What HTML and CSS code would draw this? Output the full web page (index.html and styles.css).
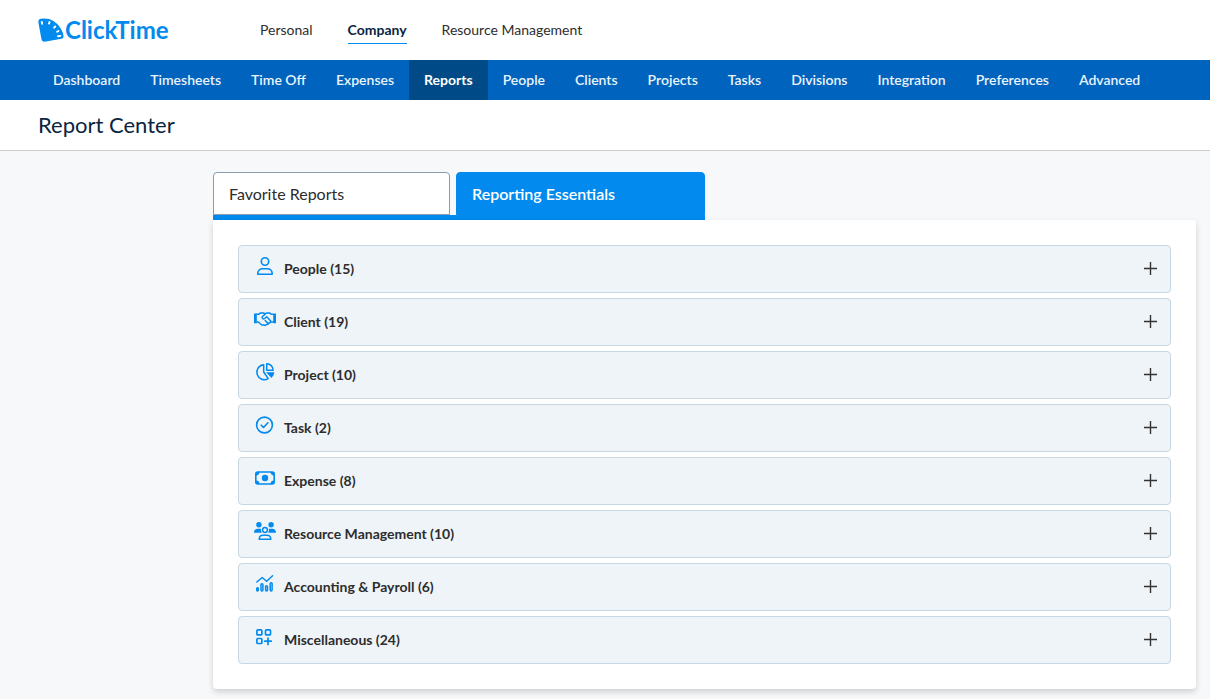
FILE: index.html
```html
<!DOCTYPE html>
<html lang="en">
<head>
<meta charset="utf-8">
<meta name="viewport" content="width=device-width, initial-scale=1">
<title>Report Center - ClickTime</title>
<link rel="stylesheet" href="styles.css">
</head>
<body>
<header class="top">
  <a class="logo" href="#">
    <svg class="logo-mark" viewBox="0 0 26 26" aria-hidden="true">
      <path fill="#028aee" d="M2.500 1.800Q15-.5 22.500 11Q25.500 16 25.600 19.500Q25.500 21.500 23.500 21.800L6.500 24.800Q4 24.800 3.500 22.500L.3 5Q.2 2.300 2.500 1.800Z"/>
      <g stroke="#fff" stroke-width="1.900" stroke-linecap="round"><path d="M3.800 5l.3 1.800M11.500 5l-.5 1.600M17.300 9.500l-1.200 1.200M20.500 14l-1.400.8M20 19.300l2.400-.4"/></g>
    </svg>
    <span class="logo-text">ClickTime</span>
  </a>
  <nav class="areas" aria-label="Areas">
    <a href="#">Personal</a>
    <a class="current" href="#" aria-current="true">Company</a>
    <a href="#">Resource Management</a>
  </nav>
</header>
<nav class="bar" aria-label="Company">
  <a href="#">Dashboard</a>
  <a href="#">Timesheets</a>
  <a href="#">Time Off</a>
  <a href="#">Expenses</a>
  <a class="current" href="#" aria-current="page">Reports</a>
  <a href="#">People</a>
  <a href="#">Clients</a>
  <a href="#">Projects</a>
  <a href="#">Tasks</a>
  <a href="#">Divisions</a>
  <a href="#">Integration</a>
  <a href="#">Preferences</a>
  <a href="#">Advanced</a>
</nav>
<div class="title"><h1>Report Center</h1></div>
<main class="content">
  <div class="tabs" role="tablist">
    <button class="tab" type="button" role="tab" aria-selected="false">Favorite Reports</button>
    <button class="tab active" type="button" role="tab" aria-selected="true">Reporting Essentials</button>
  </div>
  <section class="panel">
    <button class="row" type="button" aria-expanded="false">
      <svg class="icon" viewBox="0 0 22 20" aria-hidden="true"><g fill="none" stroke="#028aee" stroke-width="1.600"><circle cx="11" cy="5.500" r="3.700"/><path d="M3.800 18.200h14.400v-.7c0-3-2.200-4.800-5-4.800H8.800c-2.800 0-5 1.800-5 4.800z" stroke-linejoin="round"/></g></svg>
      <span class="label">People (15)</span>
      <svg class="plus" viewBox="0 0 13 13" aria-hidden="true"><path d="M6.500 0v13M0 6.500h13"/></svg>
    </button>
    <button class="row" type="button" aria-expanded="false">
      <svg class="icon" viewBox="0 0 22 20" aria-hidden="true"><path fill="#028aee" d="M0 4.500h2.800v9.800H0zM19.200 4.500H22v9.800h-2.800z"/><path fill="none" stroke="#028aee" stroke-width="1.500" stroke-linejoin="round" stroke-linecap="round" d="M2.800 5.300h1.700L6.500 4h3l1.500.7M2.800 13h1.500l3.500 3h2l1.400.5 1.200-1 1.600-.2 1-1.400 1.800-.9h2.400M19.200 5.300h-1.700L15.500 4h-3L8.200 7.800c-.6 1.600 1.200 2.700 2.500 1.700l2-1.700 4 4.200c.4.700 0 1.300-.7 1.800M11.200 11.500l2.400 2.600"/></svg>
      <span class="label">Client (19)</span>
      <svg class="plus" viewBox="0 0 13 13" aria-hidden="true"><path d="M6.500 0v13M0 6.500h13"/></svg>
    </button>
    <button class="row" type="button" aria-expanded="false">
      <svg class="icon" viewBox="0 0 22 20" aria-hidden="true"><path fill="none" stroke="#028aee" stroke-width="1.500" stroke-linejoin="round" d="M9.700 2.700a7.500 7.500 0 1 0 4.500 13.900L9.700 10zM12.700 1.700v6.500h6.400a6.500 6.500 0 0 0-6.400-6.500z"/><path fill="#028aee" d="M12 10.200h8.300a7.500 7.500 0 0 1-2.800 5.700z"/></svg>
      <span class="label">Project (10)</span>
      <svg class="plus" viewBox="0 0 13 13" aria-hidden="true"><path d="M6.500 0v13M0 6.500h13"/></svg>
    </button>
    <button class="row" type="button" aria-expanded="false">
      <svg class="icon" viewBox="0 0 22 20" aria-hidden="true"><g fill="none" stroke="#028aee" stroke-width="1.600" stroke-linecap="round" stroke-linejoin="round"><circle cx="10.500" cy="10" r="7.900"/><path d="M7.200 10.200l2.300 2.300 4.400-4.700"/></g></svg>
      <span class="label">Task (2)</span>
      <svg class="plus" viewBox="0 0 13 13" aria-hidden="true"><path d="M6.500 0v13M0 6.500h13"/></svg>
    </button>
    <button class="row" type="button" aria-expanded="false">
      <svg class="icon" viewBox="0 0 22 20" aria-hidden="true"><rect x="1.800" y="4" width="18.400" height="12" rx="2" fill="none" stroke="#028aee" stroke-width="1.600"/><path fill="#028aee" d="M2 4h3.400a3.400 3.400 0 0 1-3.400 3.400zM20 4h-3.400a3.400 3.400 0 0 0 3.400 3.400zM2 16h3.400a3.400 3.400 0 0 0-3.400-3.400zM20 16h-3.400a3.400 3.400 0 0 1 3.400-3.400z"/><circle cx="11" cy="10" r="3.200" fill="#028aee"/></svg>
      <span class="label">Expense (8)</span>
      <svg class="plus" viewBox="0 0 13 13" aria-hidden="true"><path d="M6.500 0v13M0 6.500h13"/></svg>
    </button>
    <button class="row" type="button" aria-expanded="false">
      <svg class="icon" viewBox="0 0 22 20" aria-hidden="true"><g fill="#028aee"><circle cx="4.900" cy="3.800" r="2.700"/><circle cx="17.100" cy="3.800" r="2.700"/><path d="M0 11.700c0-2.500 1.500-4 3.700-4h2.200c.6 0 .9.200 1.200.4-.2 1.500 0 2.500.8 3.600zM22 11.700c0-2.500-1.500-4-3.700-4h-2.200c-.6 0-.9.200-1.200.4.200 1.500 0 2.500-.8 3.600z"/></g><g fill="none" stroke="#028aee" stroke-width="1.500" stroke-linejoin="round"><circle cx="11" cy="9" r="2.400"/><path d="M5.200 18.200h11.600c0-2.300-1.500-4-3.800-4H9c-2.300 0-3.800 1.700-3.800 4z"/></g></svg>
      <span class="label">Resource Management (10)</span>
      <svg class="plus" viewBox="0 0 13 13" aria-hidden="true"><path d="M6.500 0v13M0 6.500h13"/></svg>
    </button>
    <button class="row" type="button" aria-expanded="false">
      <svg class="icon" viewBox="0 0 22 20" aria-hidden="true"><g fill="none" stroke="#028aee" stroke-width="1.500"><path stroke-linecap="round" stroke-linejoin="round" d="M2.800 8l5.400-4.500 4.400 3.700 6-5.400"/><rect x="2.700" y="13.700" width="1.600" height="3.200" rx=".8"/><rect x="7" y="9.700" width="1.900" height="7.200" rx=".9"/><rect x="11.600" y="11.700" width="1.900" height="5.200" rx=".9"/><rect x="16.200" y="8.700" width="1.900" height="8.200" rx=".9"/></g></svg>
      <span class="label">Accounting &amp; Payroll (6)</span>
      <svg class="plus" viewBox="0 0 13 13" aria-hidden="true"><path d="M6.500 0v13M0 6.500h13"/></svg>
    </button>
    <button class="row" type="button" aria-expanded="false">
      <svg class="icon" viewBox="0 0 22 20" aria-hidden="true"><g fill="none" stroke="#028aee" stroke-width="1.700"><rect x="2.900" y="2.900" width="5" height="5" rx="1"/><rect x="11.500" y="2.900" width="5" height="5" rx="1"/><rect x="2.900" y="11.500" width="5" height="5" rx="1"/><path stroke-linecap="round" d="M14 11v6.400M10.800 14.200h6.400"/></g></svg>
      <span class="label">Miscellaneous (24)</span>
      <svg class="plus" viewBox="0 0 13 13" aria-hidden="true"><path d="M6.500 0v13M0 6.500h13"/></svg>
    </button>
  </section>
</main>
</body>
</html>
```
FILE: styles.css
```css
* { box-sizing: border-box; }
body {
  margin: 0;
  background: #f6f8fa;
  color: #2d2d2d;
  font-family: Lato, sans-serif;
  font-size: 14px;
}
a { color: inherit; text-decoration: none; }
button { font: inherit; color: inherit; text-align: left; cursor: pointer; }

.top {
  display: flex;
  align-items: center;
  height: 60px;
  padding: 0 38px;
  background: #fff;
}
.logo {
  display: flex;
  align-items: center;
  gap: 1px;
  width: 222px;
  color: #028aee;
}
.logo-mark { width: 26px; height: 26px; }
.logo-text {
  font-size: 24px;
  font-weight: 700;
  line-height: 28px;
}
.areas { display: flex; gap: 35px; }
.areas a { line-height: 26px; border-bottom: 1px solid transparent; }
.areas .current {
  color: #0a2540;
  font-weight: 700;
  border-bottom-color: #028aee;
}

.bar {
  display: flex;
  padding: 0 38px;
  background: #0063be;
  color: #eaf3fb;
  font-weight: 600;
}
.bar a { padding: 0 15px; line-height: 40px; white-space: nowrap; }
.bar .current { background: #004a87; color: #fff; font-weight: 700; }

.title {
  padding: 10px 38px;
  background: #fff;
  border-bottom: 1px solid #ccc;
}
.title h1 {
  margin: 0;
  color: #0a2540;
  font-size: 22px;
  font-weight: 400;
  line-height: 30px;
}

.content { padding: 21px 14px 10px 213px; }
.tabs {
  display: flex;
  gap: 6px;
  width: 492px;
  border-bottom: 5px solid #028aee;
}
.tab {
  width: 237px;
  height: 43px;
  padding: 0 15px;
  font-size: 16px;
  background: #fff;
  border: 1px solid #8a9bb0;
  border-radius: 4px 4px 0 0;
}
.tab.active {
  flex: 1;
  background: #028aee;
  border-color: #028aee;
  color: #fff;
  font-weight: 600;
}

.panel {
  display: grid;
  gap: 5px;
  padding: 25px;
  background: #fff;
  border-radius: 0 4px 4px 4px;
  box-shadow: 0 3px 6px rgba(0, 0, 0, 0.16);
}
.row {
  display: flex;
  align-items: center;
  height: 48px;
  padding: 0 13px 2px 15px;
  background: #eff4f8;
  border: 1px solid #c8d8e2;
  border-radius: 4px;
}
.icon { width: 22px; height: 20px; margin-bottom: 5px; }
.label { flex: 1; padding-left: 8px; font-weight: 700; }
.plus { width: 13px; height: 13px; stroke: #333; stroke-width: 1.4; }
```
